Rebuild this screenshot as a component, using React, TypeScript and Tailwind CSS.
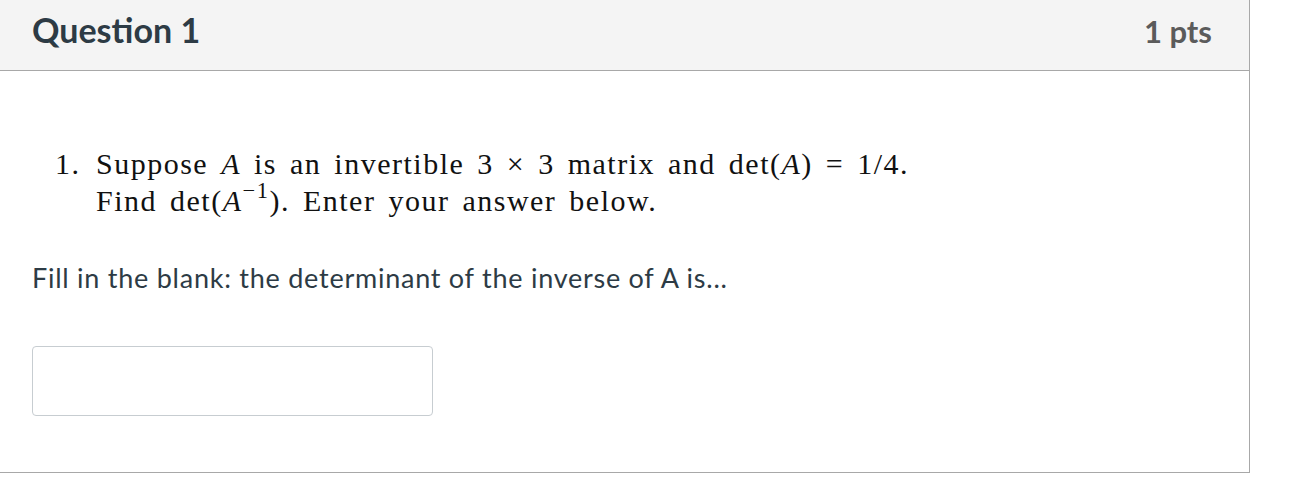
import React from "react";

export default function App() {
  return (
    <div className="w-[1316px] h-[480px] bg-white">
      <div className="w-[1250px] border-r border-b border-[#a8a8a8]">
        {/* Header */}
        <div className="h-[71px] bg-[#f4f4f4] border-b border-[#a8a8a8] flex items-baseline justify-between pt-[13px] pl-[32px] pr-[37px]">
          <h2 className="font-['Lato',sans-serif] font-bold text-[34px] leading-none text-[#2d3b45]">
            Question 1
          </h2>
          <span className="font-['Lato',sans-serif] font-bold text-[31px] leading-none text-[#5b5b5b]">
            1 pts
          </span>
        </div>

        {/* Body */}
        <div className="pl-[32px] pt-[74px] pb-[56px]">
          <div className="flex font-['Liberation_Serif',serif] text-[30px] leading-[37px] tracking-[1.5px] [word-spacing:4px] text-[#111]">
            <span className="w-[41px] pl-[23px] box-content shrink-0">1.</span>
            <div>
              <div>
                Suppose <i>A</i> is an invertible 3 × 3 matrix and det(<i>A</i>) = 1/4.
              </div>
              <div>
                Find det(<i>A</i>
                <sup className="top-[-0.6em]">−1</sup>). Enter your answer below.
              </div>
            </div>
          </div>

          <p className="mt-[43px] font-['Lato',sans-serif] text-[27px] leading-[32px] tracking-[0.75px] text-[#2d3b45]">
            Fill in the blank: the determinant of the inverse of A is...
          </p>

          <input
            type="text"
            className="mt-[52px] block w-[401px] h-[70px] border border-[#c7cdd1] rounded-[4px] bg-white"
          />
        </div>
      </div>
    </div>
  );
}
